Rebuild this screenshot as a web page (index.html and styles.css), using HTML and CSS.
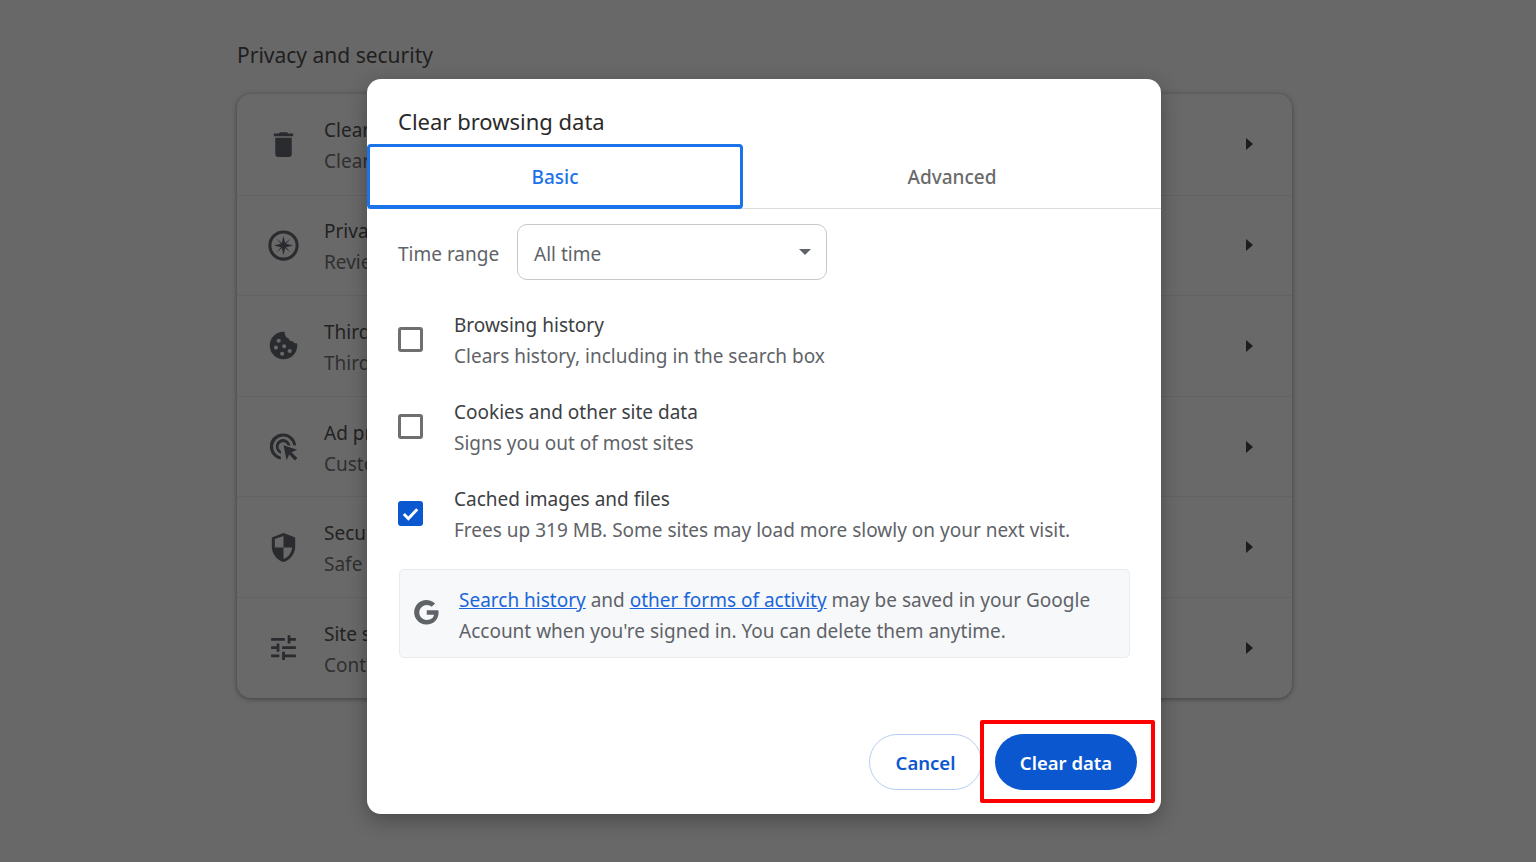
FILE: index.html
```html
<!DOCTYPE html>
<html lang="en">
<head>
    <meta charset="UTF-8">
    <meta name="viewport" content="width=device-width, initial-scale=1.0">
    <title>Clear browsing data</title>
    <link rel="stylesheet" href="styles.css">
</head>
<body>
    <div class="settings">
        <h2 class="section-title">Privacy and security</h2>
        <div class="card">
            <div class="row">
                <svg class="row-icon" viewBox="0 0 24 24"><path d="M15.500 4l-1-1h-5l-1 1H5v2h14V4zM6 7v12c0 1.100.9 2 2 2h8c1.100 0 2-.9 2-2V7z"/></svg>
                <div class="row-text"><div>Clear browsing data</div><div>Clear history, cookies</div></div>
                <span class="arrow"></span>
            </div>
            <div class="row">
                <svg class="row-icon" viewBox="0 0 24 24"><path fill-rule="evenodd" d="M12 1a11 11 0 1 0 0 22 11 11 0 0 0 0-22zm0 2.200a8.800 8.800 0 1 1 0 17.600 8.800 8.800 0 0 1 0-17.600z"/><path d="M12 5l1.200 5.100 3.800-3.100-3.100 3.800L19 12l-5.100 1.200 3.100 3.800-3.800-3.100L12 19l-1.200-5.100-3.800 3.100 3.100-3.800L5 12l5.100-1.200L7 7l3.800 3.100z"/></svg>
                <div class="row-text"><div>Privacy Guide</div><div>Review key settings</div></div>
                <span class="arrow"></span>
            </div>
            <div class="row">
                <svg class="row-icon" viewBox="0 0 24 24"><path fill-rule="evenodd" d="M12 2a10 10 0 1 0 10 10c0-.6-.1-1.100-.2-1.600-1.300.3-2.500-.4-2.900-1.500-1.500.4-3-.6-3.200-2.100C14 6.600 12.900 5 12.800 2zM8.500 7a1.500 1.500 0 1 1 0 3 1.500 1.500 0 0 1 0-3zm-2 5a1.500 1.500 0 1 1 0 3 1.500 1.500 0 0 1 0-3zm6-1a1.500 1.500 0 1 1 0 3 1.500 1.500 0 0 1 0-3zm4 3.500a1.500 1.500 0 1 1 0 3 1.500 1.500 0 0 1 0-3zm-5.500 2a1.500 1.500 0 1 1 0 3 1.500 1.500 0 0 1 0-3z"/></svg>
                <div class="row-text"><div>Third-party cookies</div><div>Third-party cookies are blocked</div></div>
                <span class="arrow"></span>
            </div>
            <div class="row">
                <svg class="row-icon" viewBox="0 0 24 24"><path d="M11.700 2.500a9.500 9.500 0 0 0-1.500 18.900l-.3-2.100a7.400 7.400 0 1 1 9.200-8.300l2.100.3a9.500 9.500 0 0 0-9.500-8.800z"/><path d="M11.700 6.500a5.500 5.500 0 0 0-1.300 10.800l-.4-2.100a3.400 3.400 0 1 1 4.900-4.200l2.100.4a5.500 5.500 0 0 0-5.300-4.900z"/><path d="M12 11l10 3.300-4.200 1.800 4.300 4.300-1.700 1.700-4.300-4.300-1.800 4.200z"/></svg>
                <div class="row-text"><div>Ad privacy</div><div>Customize the info</div></div>
                <span class="arrow"></span>
            </div>
            <div class="row">
                <svg class="row-icon" viewBox="0 0 24 24"><path fill-rule="evenodd" d="M12 1.500L3.500 4.700v6.500c0 5.200 3.600 10 8.500 11.300 4.900-1.300 8.500-6.100 8.500-11.300V4.700zM12 12H5.700V5.900L12 3.600zm0 0h6.300c-.4 3.900-2.900 7.300-6.300 8.400z"/></svg>
                <div class="row-text"><div>Security</div><div>Safe Browsing</div></div>
                <span class="arrow"></span>
            </div>
            <div class="row">
                <svg class="row-icon" viewBox="0 0 24 24"><path d="M3 17v2h6v-2H3zM3 5v2h10V5H3zm10 16v-2h8v-2h-8v-2h-2v6h2zM7 9v2H3v2h4v2h2V9H7zm14 4v-2H11v2h10zm-6-4h2V7h4V5h-4V3h-2v6z"/></svg>
                <div class="row-text"><div>Site settings</div><div>Controls what info</div></div>
                <span class="arrow"></span>
            </div>
        </div>
    </div>

    <div class="dialog">
        <h1 class="dialog-title">Clear browsing data</h1>
        <div class="tabs">
            <div class="tab tab-active">Basic</div>
            <div class="tab">Advanced</div>
        </div>
        <div class="time-range">
            <span class="time-label">Time range</span>
            <div class="select">All time<span class="caret"></span></div>
        </div>
        <div class="option">
            <span class="check"></span>
            <div class="option-text"><div class="option-name">Browsing history</div><div>Clears history, including in the search box</div></div>
        </div>
        <div class="option">
            <span class="check"></span>
            <div class="option-text"><div class="option-name">Cookies and other site data</div><div>Signs you out of most sites</div></div>
        </div>
        <div class="option">
            <span class="check check-on">
                <svg viewBox="0 0 24 24"><path d="M5 12.500l4.800 4.800L19 7.500" fill="none" stroke="#fff" stroke-width="3"/></svg>
            </span>
            <div class="option-text"><div class="option-name">Cached images and files</div><div>Frees up 319 MB. Some sites may load more slowly on your next visit.</div></div>
        </div>
        <div class="notice">
            <svg class="g-logo" viewBox="0 0 24 24"><path d="M12.200 10.200v3.700h6c-.5 2.800-2.800 4.300-6 4.300a6.200 6.200 0 1 1 4.100-10.900l2.800-2.800A10.200 10.200 0 1 0 12.200 22c5.800 0 9.800-4.100 9.800-9.900 0-.7-.1-1.300-.2-1.900z"/></svg>
            <p><a href="#">Search history</a> and <a href="#">other forms of activity</a> may be saved in your Google Account when you're signed in. You can delete them anytime.</p>
        </div>
        <div class="actions">
            <button class="btn btn-cancel">Cancel</button>
            <div class="highlight"><button class="btn btn-clear">Clear data</button></div>
        </div>
    </div>
</body>
</html>
```

FILE: styles.css
```css
* {
    box-sizing: border-box;
}
html, body {
    margin: 0;
    height: 100%;
}
body {
    background-color: #686868;
    color: #262626;
    font-family: "Noto Sans", Arial, sans-serif;
    font-size: 19px;
    overflow: hidden;
}
.settings {
    width: 1055px;
    margin-left: 237px;
    padding-top: 40px;
}
.section-title {
    margin: 0 0 23px;
    font-size: 21px;
    line-height: 31px;
    font-weight: 400;
    color: #1f1f1f;
}
.card {
    background-color: #696969;
    border-radius: 14px;
    box-shadow: 0 1px 5px rgba(0, 0, 0, 0.4);
}
.row {
    height: 100.6px;
    display: flex;
    align-items: center;
    padding: 0 39px 0 30px;
    border-top: 1px solid #626262;
}
.row:first-child {
    border-top: none;
}
.row-icon {
    width: 33px;
    height: 33px;
    fill: #2a2b2e;
    flex: none;
}
.row-text {
    flex: 1;
    margin-left: 24px;
    padding-top: 4px;
    line-height: 31px;
    color: #222;
}
.row-text div + div {
    color: #303030;
}
.arrow {
    width: 0;
    height: 0;
    border-left: 7px solid #1d1d1d;
    border-top: 6px solid transparent;
    border-bottom: 6px solid transparent;
}
.dialog {
    position: absolute;
    left: 367px;
    top: 79px;
    width: 794px;
    height: 735px;
    background-color: #fff;
    border-radius: 14px;
    box-shadow: 0 6px 20px rgba(0, 0, 0, 0.3);
    display: flex;
    flex-direction: column;
}
.dialog-title {
    margin: 0;
    padding: 27px 31px 7px;
    font-size: 22px;
    line-height: 31px;
    font-weight: 400;
    color: #2a2a2a;
}
.tabs {
    display: flex;
    height: 65px;
    border-bottom: 1px solid #dcdcdc;
    flex: none;
}
.tab {
    flex: 1;
    padding-top: 2px;
    display: flex;
    align-items: center;
    justify-content: center;
    font-weight: 500;
    color: #6a6a6a;
}
.tab-active {
    flex: 0 0 376px;
    height: 65px;
    padding-top: 2px;
    color: #1a73e8;
    border: 3px solid #1a73e8;
    border-bottom-width: 4px;
    border-radius: 4px;
}
.time-range {
    display: flex;
    align-items: center;
    padding: 15px 31px 0;
}
.time-label {
    width: 119px;
    padding-top: 4px;
    color: #5f6368;
}
.select {
    position: relative;
    width: 310px;
    height: 56px;
    padding: 4px 0 0 16px;
    display: flex;
    align-items: center;
    border: 1px solid #c8c8c8;
    border-radius: 10px;
    color: #5f6368;
}
.caret {
    position: absolute;
    right: 15px;
    top: 24px;
    border-top: 6px solid #5f6368;
    border-left: 6px solid transparent;
    border-right: 6px solid transparent;
}
.option {
    display: flex;
    align-items: center;
    padding: 0 31px;
    height: 87px;
    color: #5f6368;
    line-height: 31px;
}
.time-range + .option {
    margin-top: 16px;
}
.option-text {
    padding-top: 2px;
}
.option-name {
    color: #3c4043;
}
.check {
    width: 25px;
    height: 25px;
    flex: none;
    margin: 0 31px 1px 0;
    border: 3px solid #6f6f6f;
    border-radius: 3px;
}
.check-on {
    background-color: #0b57d0;
    border: none;
    padding: 1px;
}
.check-on svg {
    display: block;
}
.notice {
    margin: 12px 31px 0 32px;
    height: 89px;
    display: flex;
    align-items: center;
    padding: 0 20px 0 12px;
    background-color: #f7f8fa;
    border: 1px solid #eaebed;
    border-radius: 5px;
    color: #5f6368;
}
.g-logo {
    width: 29px;
    height: 29px;
    flex: none;
    fill: #5f6368;
    margin: 0 18px 2px 0;
}
.notice p {
    margin: 0;
    padding-top: 4px;
    line-height: 31px;
}
.notice a {
    color: #1a66d9;
}
.actions {
    margin-top: auto;
    display: flex;
    justify-content: flex-end;
    align-items: center;
    padding: 0 6px 11px 0;
}
.highlight {
    padding: 10px 14px 9px 11px;
    border: 4px solid #f00;
    border-radius: 2px;
}
.btn {
    height: 56px;
    padding: 1px 0 0;
    border-radius: 28px;
    font-family: inherit;
    font-size: 18.5px;
    font-weight: 600;
    cursor: pointer;
}
.btn-cancel {
    width: 113px;
    margin-right: -2px;
    background-color: #fff;
    color: #0b57d0;
    border: 1px solid #b7cdf3;
}
.btn-clear {
    width: 142px;
    display: block;
    background-color: #0b57d0;
    color: #fff;
    border: none;
}
```
